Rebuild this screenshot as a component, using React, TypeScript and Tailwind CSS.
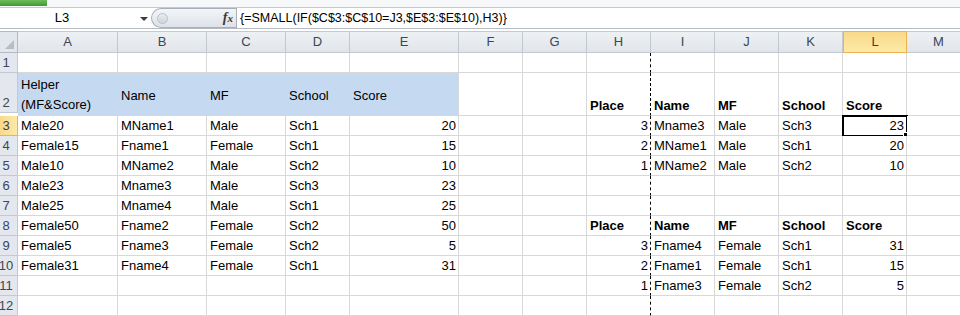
type Val = string | number | null;

const COL_LETTERS = ['A', 'B', 'C', 'D', 'E', 'F', 'G', 'H', 'I', 'J', 'K', 'L', 'M'];

const rows: { n: number; h: string; cells: Val[]; boldRight?: boolean }[] = [
  { n: 1, h: 'h-[20px]', cells: [null, null, null, null, null, null, null, null, null, null, null, null, null] },
  { n: 2, h: 'h-[40px]', cells: ['Helper (MF&Score)', 'Name', 'MF', 'School', 'Score', null, null, 'Place', 'Name', 'MF', 'School', 'Score', null], boldRight: true },
  { n: 3, h: 'h-[20px]', cells: ['Male20', 'MName1', 'Male', 'Sch1', 20, null, null, 3, 'Mname3', 'Male', 'Sch3', 23, null] },
  { n: 4, h: 'h-[20px]', cells: ['Female15', 'Fname1', 'Female', 'Sch1', 15, null, null, 2, 'MName1', 'Male', 'Sch1', 20, null] },
  { n: 5, h: 'h-[20px]', cells: ['Male10', 'MName2', 'Male', 'Sch2', 10, null, null, 1, 'MName2', 'Male', 'Sch2', 10, null] },
  { n: 6, h: 'h-[20px]', cells: ['Male23', 'Mname3', 'Male', 'Sch3', 23, null, null, null, null, null, null, null, null] },
  { n: 7, h: 'h-[20px]', cells: ['Male25', 'Mname4', 'Male', 'Sch1', 25, null, null, null, null, null, null, null, null] },
  { n: 8, h: 'h-[20px]', cells: ['Female50', 'Fname2', 'Female', 'Sch2', 50, null, null, 'Place', 'Name', 'MF', 'School', 'Score', null], boldRight: true },
  { n: 9, h: 'h-[20px]', cells: ['Female5', 'Fname3', 'Female', 'Sch2', 5, null, null, 3, 'Fname4', 'Female', 'Sch1', 31, null] },
  { n: 10, h: 'h-[20px]', cells: ['Female31', 'Fname4', 'Female', 'Sch1', 31, null, null, 2, 'Fname1', 'Female', 'Sch1', 15, null] },
  { n: 11, h: 'h-[20px]', cells: [null, null, null, null, null, null, null, 1, 'Fname3', 'Female', 'Sch2', 5, null] },
  { n: 12, h: 'h-[20px]', cells: [null, null, null, null, null, null, null, null, null, null, null, null, null] },
  { n: 13, h: 'h-[20px]', cells: [null, null, null, null, null, null, null, null, null, null, null, null, null] },
];

function FormulaBar() {
  return (
    <div className="flex h-[21px] border-b border-[#b6bcc6] bg-white">
      <div className="relative flex w-[151px] items-center">
        <span className="w-[124px] text-center text-[13px] text-black">L3</span>
        <span className="absolute left-[140px] top-[9px] h-0 w-0 border-x-[4px] border-t-[4px] border-x-transparent border-t-[#3c3c3c]" />
      </div>
      <div className="flex w-[85px] items-center rounded-l-full border border-r-0 border-[#a7afba] bg-gradient-to-b from-[#f3f5f8] to-[#dde2e8]">
        <span className="ml-[5px] h-[11px] w-[11px] rounded-full border border-[#b9c0ca] bg-gradient-to-b from-[#e9ecf0] to-[#cfd5dd]" />
        <span className="ml-auto mr-[3px] font-['Liberation_Serif',serif] text-[14px] font-bold italic leading-none text-[#3a3a3a]">
          f<span className="text-[11px]">x</span>
        </span>
      </div>
      <div className="flex flex-1 items-center border-l border-[#a7afba] pl-[3px] text-[12.5px] text-black">
        {'{=SMALL(IF($C$3:$C$10=J3,$E$3:$E$10),H3)}'}
      </div>
    </div>
  );
}

function HeaderRow() {
  return (
    <>
      <div className="relative h-[22px] border-y border-r border-[#b1b9c4] bg-[#e3e7ed]">
        <span className="absolute bottom-[3px] right-[3px] h-0 w-0 border-b-[9px] border-l-[9px] border-b-[#b7bdc6] border-l-transparent" />
      </div>
      {COL_LETTERS.map(c =>
        c === 'L' ? (
          <div key={c} className="flex h-[22px] items-center justify-center border border-[#f0b14f] bg-gradient-to-b from-[#f9d98a] to-[#fdeaa6] text-[13px] text-[#3d3d3d]">
            {c}
          </div>
        ) : (
          <div key={c} className="flex h-[22px] items-center justify-center border-y border-r border-[#c3c9d1] bg-gradient-to-b from-[#eef1f4] to-[#e1e5ea] text-[13px] text-[#3b4656]">
            {c}
          </div>
        ),
      )}
    </>
  );
}

function DataCell({ v, row, col, bold }: { v: Val; row: number; col: number; bold: boolean }) {
  const blue = row === 2 && col <= 4;
  const pageBreak = col === 7;
  const selected = row === 3 && col === 11;
  const isNum = typeof v === 'number';

  let border = 'border-r border-b border-[#d8d8d8]';
  if (blue) border = 'border-r border-b border-[#c5d9f1]';
  if (blue && col === 4) border = 'border-r border-b border-r-[#d8d8d8] border-b-[#c5d9f1]';
  if (pageBreak) border = 'border-r border-b border-b-[#d8d8d8] border-r-black border-dashed [border-bottom-style:solid]';

  return (
    <div className={`relative flex ${blue ? 'items-center pt-[2px]' : 'items-end pb-[1px]'} ${border} ${blue ? 'bg-[#c5d9f1]' : 'bg-white'} ${isNum ? 'justify-end pr-[2px]' : 'pl-[3px]'}`}>
      {v !== null && (
        <span className={`${bold ? 'font-bold' : ''} ${row === 2 && col === 0 ? 'leading-[20px]' : 'leading-[17px]'} whitespace-pre-line text-[13px] text-black`}>
          {row === 2 && col === 0 ? 'Helper\n(MF&Score)' : v}
        </span>
      )}
      {selected && (
        <>
          <span className="pointer-events-none absolute -left-[1px] -top-[1px] h-[22px] w-[66px] border-2 border-black" />
          <span className="absolute -bottom-[3px] -right-[3px] h-[6px] w-[6px] border border-white bg-black" />
        </>
      )}
    </div>
  );
}

export default function App() {
  return (
    <div className="h-[316px] w-[960px] overflow-hidden bg-white font-['Liberation_Sans',Arial,sans-serif]">
      <div className="flex h-[8px] border-b border-[#c4cad3] bg-[#f7f8fa]">
        <div className="h-[6px] w-[47px] bg-gradient-to-b from-[#6dbd5a] to-[#3e9a33]" />
      </div>
      <FormulaBar />
      <div className="h-[2px] bg-white" />
      <div className="grid grid-cols-[18px_100px_89px_79px_64px_109px_64px_64px_64px_64px_64px_64px_64px_64px]">
        <HeaderRow />
        {rows.map(r => (
          <div key={r.n} className="contents">
            <div className={`${r.h} flex items-end justify-center border-r border-b pb-[1px] pr-[5px] text-[13px] leading-[17px] ${r.n === 3 ? 'border-[#f0b14f] bg-gradient-to-r from-[#f9d98a] to-[#fdeaa6] text-[#3d3d3d]' : 'border-[#c3c9d1] bg-[#e4e8ee] text-[#3b4656]'}`}>
              {r.n < 13 ? r.n : ''}
            </div>
            {r.cells.map((v, i) => (
              <DataCell key={i} v={v} row={r.n} col={i} bold={!!r.boldRight && i >= 7} />
            ))}
          </div>
        ))}
      </div>
    </div>
  );
}
